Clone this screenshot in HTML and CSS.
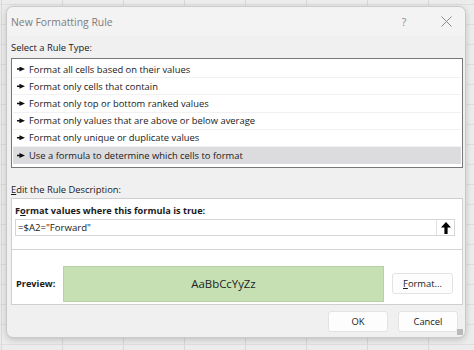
FILE: index.html
```html
<!DOCTYPE html>
<html lang="en">
<head>
    <meta charset="UTF-8">
    <title>New Formatting Rule</title>
    <link rel="stylesheet" href="styles.css">
</head>
<body>

    <div class="dialog">
        <div class="title-bar">
            <span class="title">New Formatting Rule</span>
            <span class="help">?</span>
            <span class="close">
                <svg width="11" height="11" viewBox="0 0 11 11"><path d="M0.5 0.5 L10.5 10.5 M10.5 0.5 L0.5 10.5" stroke="#8a8a8a" stroke-width="1"/></svg>
            </span>
        </div>

        <div class="dialog-body">
            <div class="label first">Select a Rule Type:</div>
            <ul class="rule-list">
                <li><span class="pointer"></span>Format all cells based on their values</li>
                <li><span class="pointer"></span>Format only cells that contain</li>
                <li><span class="pointer"></span>Format only top or bottom ranked values</li>
                <li><span class="pointer"></span>Format only values that are above or below average</li>
                <li><span class="pointer"></span>Format only unique or duplicate values</li>
                <li class="selected"><span class="pointer"></span>Use a formula to determine which cells to format</li>
            </ul>

            <div class="label second"><u>E</u>dit the Rule Description:</div>
            <div class="desc-box">
                <div class="formula-area">
                    <div class="bold-label">F<u>o</u>rmat values where this formula is true:</div>
                    <div class="formula-input">
                        <span>=$A2="Forward"</span>
                        <span class="collapse-btn">
                            <svg width="10" height="12" viewBox="0 0 10 12"><path d="M5 0 L10 5.5 H6.6 V12 H3.4 V5.5 H0 Z" fill="#000"/></svg>
                        </span>
                    </div>
                </div>
                <div class="preview-row">
                    <span class="bold-label">Preview:</span>
                    <div class="preview-box">AaBbCcYyZz</div>
                    <button class="btn format-btn"><u>F</u>ormat...</button>
                </div>
            </div>

            <div class="footer">
                <button class="btn">OK</button>
                <button class="btn">Cancel</button>
            </div>
        </div>
        <span class="grip"></span>
    </div>

</body>
</html>
```

FILE: styles.css
```css
body {
    margin: 0;
    height: 350px;
    overflow: hidden;
    font-family: "Open Sans", "Noto Sans", sans-serif;
    font-size: 9.4px;
    color: #1a1a1a;
    background-color: #ececec;
    background-image:
        linear-gradient(90deg, #d8d8d8 1px, transparent 1px),
        linear-gradient(180deg, #dedede 1px, transparent 1px);
    background-size: 61px 20px;
    background-position: 1px 4px;
}
.dialog {
    position: relative;
    margin: 6px 0 0 6px;
    width: 460px;
    height: 332px;
    box-sizing: border-box;
    background: #f0f0f0;
    border: 1px solid #c9c9c9;
    border-radius: 7px;
    box-shadow: 0 2px 6px rgba(0, 0, 0, 0.18);
    display: flex;
    flex-direction: column;
}
.title-bar {
    height: 29px;
    display: flex;
    align-items: center;
    padding-left: 4px;
    background: #f3f3f3;
    border-radius: 7px 7px 0 0;
}
.title {
    flex: 1;
    font-size: 10.4px;
    color: #7d7d7d;
}
.help {
    width: 20px;
    text-align: center;
    color: #8a8a8a;
    font-size: 10.5px;
    margin-right: 22px;
}
.close {
    width: 20px;
    display: flex;
    justify-content: center;
    margin-right: 9px;
}
.dialog-body {
    flex: 1;
    display: flex;
    flex-direction: column;
    padding: 0 2px 0 4px;
}
.label {
    line-height: 16px;
}
.first {
    margin-top: 4px;
    margin-bottom: 2px;
}
.second {
    margin-top: 14px;
}
.rule-list {
    margin: 0;
    padding: 2px 1px 2px 1px;
    list-style: none;
    background: #fff;
    border: 1px solid #777;
    height: 104px;
}
.rule-list li {
    height: 17.2px;
    line-height: 17px;
    box-sizing: border-box;
    padding-left: 4px;
    border-bottom: 1px solid #f1f1f1;
    display: flex;
    align-items: center;
    white-space: nowrap;
}
.rule-list li.selected {
    background: #dcdcdf;
    border-bottom: none;
}
.pointer {
    width: 8px;
    height: 5px;
    margin-right: 4px;
    background: #111;
    clip-path: polygon(0 35%, 30% 35%, 30% 0, 100% 50%, 30% 100%, 30% 65%, 0 65%);
}
.desc-box {
    height: 107px;
    box-sizing: border-box;
    background: #fff;
    border: 1px solid #cfcfcf;
    display: flex;
    flex-direction: column;
}
.formula-area {
    padding: 3px 7px 0 3px;
    height: 51px;
    box-sizing: border-box;
    border-bottom: 1px solid #d4d4d4;
}
.bold-label {
    font-weight: bold;
    font-size: 9.2px;
    line-height: 17px;
}
.formula-input {
    height: 17px;
    box-sizing: border-box;
    border: 1px solid #d6d6d6;
    display: flex;
    align-items: center;
    justify-content: space-between;
    padding-left: 2px;
    font-size: 9.6px;
}
.collapse-btn {
    width: 17px;
    height: 15px;
    display: flex;
    align-items: center;
    justify-content: center;
    border-left: 1px solid #e2e2e2;
}
.preview-row {
    flex: 1;
    display: flex;
    align-items: center;
    padding: 14px 9px 1px 4px;
}
.preview-row .bold-label {
    width: 47px;
}
.preview-box {
    width: 321px;
    height: 36px;
    box-sizing: border-box;
    background: #c6e0b4;
    border: 1px solid #b8cfa8;
    display: flex;
    align-items: center;
    justify-content: center;
    font-size: 11.4px;
    color: #222;
}
.btn {
    font-family: inherit;
    font-size: 9.4px;
    color: #1a1a1a;
    background: #fdfdfd;
    border: 1px solid #e3e3e3;
    border-radius: 3px;
    padding: 0;
}
.format-btn {
    width: 61px;
    height: 21px;
    margin-left: auto;
}
.footer {
    display: flex;
    justify-content: flex-end;
    gap: 10px;
    margin-top: 6px;
    padding-right: 5px;
}
.footer .btn {
    width: 60px;
    height: 21px;
}
.grip {
    position: absolute;
    right: 2px;
    bottom: 2px;
    width: 6px;
    height: 6px;
    background-image: radial-gradient(#b5b5b5 0.7px, transparent 0.8px);
    background-size: 2px 2px;
}
```
